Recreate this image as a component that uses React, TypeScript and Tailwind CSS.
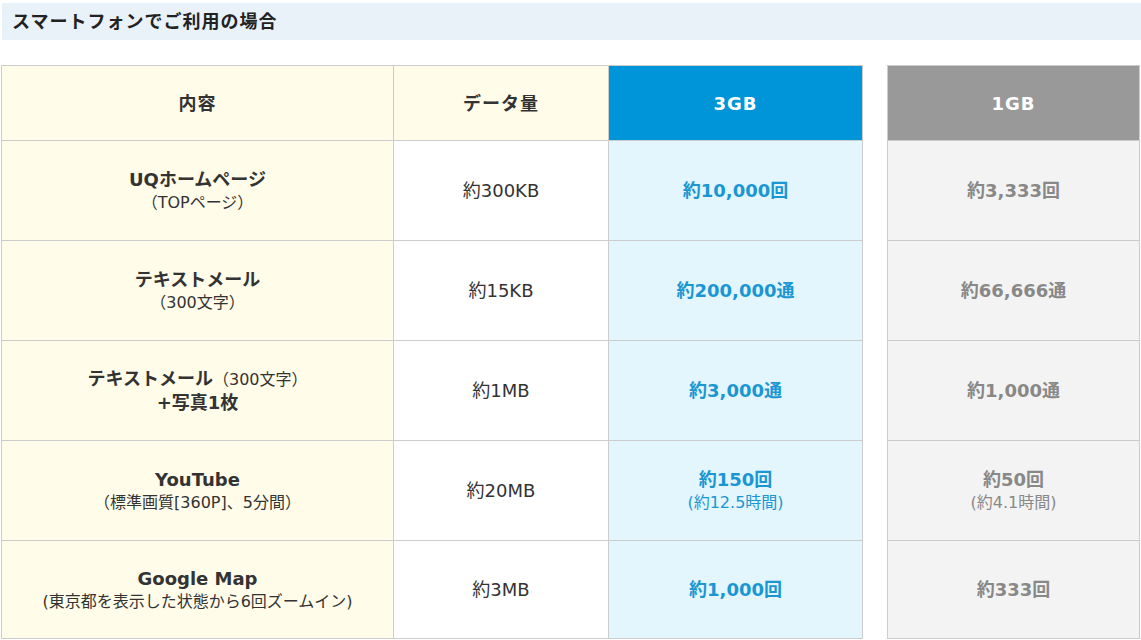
import React from 'react';

const font = 'font-["DejaVu_Sans","Noto_Sans_CJK_JP",sans-serif]';

type Row = {
  name: React.ReactNode;
  size: string;
  plan3: React.ReactNode;
  plan1: React.ReactNode;
};

const rows: Row[] = [
  {
    name: (
      <>
        <div className="font-bold text-[18px]">UQホームページ</div>
        <div className="text-[16px]">（TOPページ）</div>
      </>
    ),
    size: '約300KB',
    plan3: '約10,000回',
    plan1: '約3,333回',
  },
  {
    name: (
      <>
        <div className="font-bold text-[18px]">テキストメール</div>
        <div className="text-[16px]">（300文字）</div>
      </>
    ),
    size: '約15KB',
    plan3: '約200,000通',
    plan1: '約66,666通',
  },
  {
    name: (
      <>
        <div>
          <span className="font-bold text-[18px]">テキストメール</span>
          <span className="text-[16px]">（300文字）</span>
        </div>
        <div className="font-bold text-[18px]">+写真1枚</div>
      </>
    ),
    size: '約1MB',
    plan3: '約3,000通',
    plan1: '約1,000通',
  },
  {
    name: (
      <>
        <div className="font-bold text-[18px]">YouTube</div>
        <div className="text-[16px]">（標準画質[360P]、5分間）</div>
      </>
    ),
    size: '約20MB',
    plan3: (
      <>
        <div className="font-bold text-[18px]">約150回</div>
        <div className="font-normal text-[16px]">(約12.5時間)</div>
      </>
    ),
    plan1: (
      <>
        <div className="font-bold text-[18px]">約50回</div>
        <div className="font-normal text-[16px]">(約4.1時間)</div>
      </>
    ),
  },
  {
    name: (
      <>
        <div className="font-bold text-[18px]">Google Map</div>
        <div className="text-[16px]">(東京都を表示した状態から6回ズームイン)</div>
      </>
    ),
    size: '約3MB',
    plan3: '約1,000回',
    plan1: '約333回',
  },
];

const cell = 'flex flex-col items-center justify-center text-center border-r border-b border-[#cccccc] leading-[23px]';

function rowH(i: number) {
  return i === rows.length - 1 ? 'h-[98px]' : 'h-[100px]';
}

export default function App() {
  return (
    <div className={`${font} bg-white w-[1141px] h-[640px] overflow-hidden text-[#333333]`}>
      <div className="mt-[3px] ml-[2px] h-[37px] bg-[#e9f1f9] flex items-center pl-[10px]">
        <h2 className="font-bold text-[18px] tracking-[1px] text-[#222222]">スマートフォンでご利用の場合</h2>
      </div>

      <div className="flex items-start mt-[25px] ml-[1px]">
        {/* main table */}
        <div className="grid grid-cols-[392px_215px_254px] border-l border-t border-[#cccccc]">
          <div className={`${cell} h-[75px] bg-[#fffce9] font-bold text-[18px] tracking-[1px]`}>内容</div>
          <div className={`${cell} h-[75px] bg-[#fffce9] font-bold text-[18px] tracking-[1px]`}>データ量</div>
          <div className={`${cell} h-[75px] bg-[#0095d9] text-white font-bold text-[18px] tracking-[1px]`}>3GB</div>
          {rows.map((r, i) => (
            <React.Fragment key={i}>
              <div className={`${cell} ${rowH(i)} bg-[#fffce9]`}>{r.name}</div>
              <div className={`${cell} ${rowH(i)} bg-white text-[18px]`}>{r.size}</div>
              <div className={`${cell} ${rowH(i)} bg-[#e3f5fd] text-[#1a97d3] font-bold text-[18px]`}>{r.plan3}</div>
            </React.Fragment>
          ))}
        </div>

        {/* comparison column */}
        <div className="ml-[24px] grid grid-cols-[252px] border-l border-t border-[#cccccc]">
          <div className={`${cell} h-[75px] bg-[#999999] text-white font-bold text-[18px] tracking-[1px]`}>1GB</div>
          {rows.map((r, i) => (
            <div key={i} className={`${cell} ${rowH(i)} bg-[#f3f3f3] text-[#888888] font-bold text-[18px]`}>
              {r.plan1}
            </div>
          ))}
        </div>
      </div>
    </div>
  );
}
